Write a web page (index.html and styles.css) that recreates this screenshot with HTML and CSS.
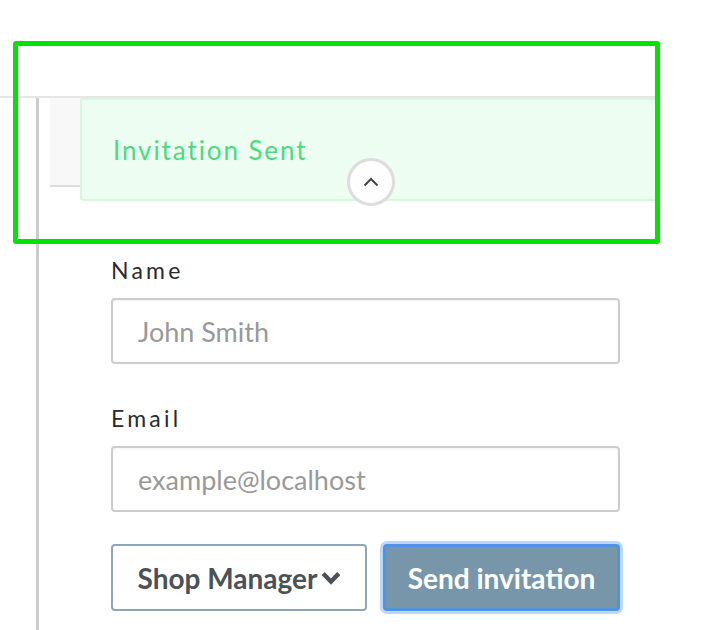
FILE: index.html
```html
<!DOCTYPE html>
<html lang="en">
<head>
<meta charset="utf-8">
<title>Invite user</title>
<link rel="stylesheet" href="styles.css">
</head>
<body>
<div class="page">
  <div class="topbar"></div>
  <div class="main">
    <div class="gutter"></div>
    <div class="rail">
      <div class="sent-area">
        <div class="card-head"></div>
        <div class="notice">
          <span class="notice-text">Invitation Sent</span>
          <button class="collapse" type="button" aria-label="Collapse">
            <svg width="16" height="10" viewBox="0 0 16 10"><polyline points="1.5,8.5 8,2 14.5,8.5" fill="none" stroke="#444" stroke-width="2"/></svg>
          </button>
        </div>
      </div>
      <form class="form">
        <label class="label" for="name">Name</label>
        <input class="field" id="name" type="text" placeholder="John Smith">
        <label class="label label-email" for="email">Email</label>
        <input class="field" id="email" type="email" placeholder="example@localhost">
        <div class="actions">
          <button class="role" type="button">Shop Manager
            <svg class="caret" width="18" height="14" viewBox="0 0 18 14"><polyline points="2.8,3.2 9,9.6 15.2,3.2" fill="none" stroke="#4b5157" stroke-width="4.4" stroke-linecap="square" stroke-linejoin="miter"/></svg>
          </button>
          <button class="send" type="button">Send invitation</button>
        </div>
      </form>
    </div>
  </div>
  <div class="highlight"></div>
</div>
</body>
</html>
```

FILE: styles.css
```css
* { box-sizing: border-box; }

html, body {
  margin: 0;
  padding: 0;
  background: #ffffff;
}

body {
  font-family: Lato, "Noto Sans", "Liberation Sans", sans-serif;
  color: #333333;
}

.page {
  position: relative;
  width: 702px;
  height: 630px;
  overflow: hidden;
}

.topbar {
  width: 656px;
  height: 98px;
  border-bottom: 2px solid #e6e6e6;
}

.main {
  display: flex;
  width: 656px;
  height: 532px;
  overflow: hidden;
}

.gutter {
  width: 36px;
  flex: none;
}

.rail {
  flex: 1;
  border-left: 3px solid #cccccc;
}

.sent-area {
  position: relative;
  height: 103px;
  padding-left: 11px;
}

.card-head {
  height: 89px;
  background: #f8f8f8;
  border-bottom: 2px solid #dddddd;
}

.notice {
  position: absolute;
  left: 41px;
  top: 0;
  width: 600px;
  height: 103px;
  background: #edfdf1;
  border: 2px solid #d6f8de;
  border-radius: 3px;
  padding: 34px 0 0 31px;
}

.notice-text {
  display: block;
  font-size: 26px;
  line-height: 32px;
  letter-spacing: 1.9px;
  color: #4cdb7c;
}

.collapse {
  position: absolute;
  left: 265px;
  top: 58px;
  width: 48px;
  height: 48px;
  border-radius: 50%;
  border: 3px solid #dddddd;
  background: #fdfefd;
  padding: 0;
  display: flex;
  align-items: center;
  justify-content: center;
}

.form {
  display: flex;
  flex-direction: column;
  padding: 54px 0 0 72px;
  width: 581px;
}

.label {
  font-size: 23px;
  line-height: 30px;
  letter-spacing: 3.2px;
  color: #2b2b2b;
  margin-bottom: 13px;
}

.label-email {
  margin-top: 39px;
}

.field {
  width: 509px;
  height: 66px;
  border: 2px solid #cccccc;
  border-radius: 4px;
  box-shadow: inset 0 1px 2px rgba(0, 0, 0, 0.05);
  padding: 0 0 0 25px;
  font-family: Lato, "Noto Sans", sans-serif;
  font-size: 27px;
  color: #333333;
  background: #ffffff;
}

.field::placeholder {
  color: #999999;
}

.actions {
  display: flex;
  gap: 16px;
  margin-top: 32px;
}

.role {
  width: 256px;
  height: 67px;
  border: 2px solid #8fa5b4;
  border-radius: 4px;
  background: #ffffff;
  font-family: Lato, "Noto Sans", sans-serif;
  font-weight: 700;
  font-size: 28px;
  color: #4b5157;
  display: flex;
  align-items: center;
  justify-content: center;
  gap: 5px;
  padding: 0;
}

.caret {
  margin-top: 3px;
}

.send {
  width: 237px;
  height: 67px;
  border: 3px solid #4f93e3;
  border-radius: 4px;
  box-shadow: 0 0 0 3px rgba(120, 175, 245, 0.5);
  background: #7896a9;
  font-family: Lato, "Noto Sans", sans-serif;
  font-weight: 700;
  font-size: 28px;
  color: #ffffff;
  padding: 0;
}

.highlight {
  position: absolute;
  left: 13px;
  top: 41px;
  width: 647px;
  height: 203px;
  border: 5px solid #00e400;
  border-radius: 3px;
  pointer-events: none;
}
```
